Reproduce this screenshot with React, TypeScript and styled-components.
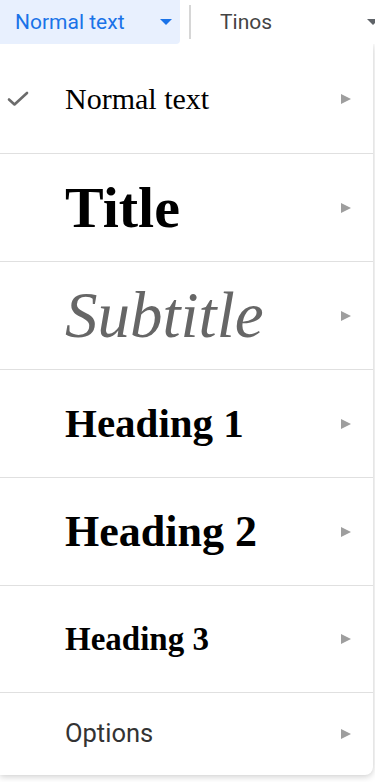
import styled, { createGlobalStyle, css } from 'styled-components';

const GlobalStyle = createGlobalStyle`
  html, body {
    margin: 0;
    padding: 0;
    background: #ffffff;
  }
  body {
    font-family: Roboto, "Liberation Sans", sans-serif;
    width: 375px;
    height: 782px;
    overflow: hidden;
  }
`;

const Toolbar = styled.div`
  display: flex;
  align-items: center;
  height: 44px;
  background: #ffffff;
  position: relative;
  z-index: 1;
`;

const StyleButton = styled.div`
  display: flex;
  align-items: center;
  justify-content: space-between;
  width: 180px;
  height: 44px;
  box-sizing: border-box;
  padding: 0 8px 0 15px;
  background: #e8f0fe;
  border-bottom-right-radius: 4px;
  color: #1a73e8;
  font-size: 21px;
`;

const Divider = styled.div`
  width: 2px;
  height: 34px;
  margin: 0 10px 0 9px;
  background: #d6d6d6;
`;

const FontButton = styled.div`
  flex: 1;
  display: flex;
  align-items: center;
  justify-content: space-between;
  padding-left: 19px;
  color: #444;
  font-size: 21px;
`;

const Caret = styled.span<{ $color: string }>`
  width: 0;
  height: 0;
  border-left: 6px solid transparent;
  border-right: 6px solid transparent;
  border-top: 6px solid ${(p) => p.$color};
`;

const Menu = styled.div`
  background: #ffffff;
  border-radius: 0 0 8px 0;
  box-shadow: 0 2px 6px rgba(0, 0, 0, 0.18), 0 -2px 4px rgba(0, 0, 0, 0.05);
  margin-right: 2px;
`;

const Row = styled.div<{ $height: number; $last?: boolean }>`
  position: relative;
  display: flex;
  align-items: center;
  box-sizing: border-box;
  height: ${(p) => p.$height}px;
  padding: 0 22px 0 65px;
  ${(p) =>
    !p.$last &&
    css`
      border-bottom: 1.5px solid #e0e0e0;
    `}
`;

const Label = styled.span<{
  $size: number;
  $weight?: number;
  $italic?: boolean;
  $color?: string;
  $sans?: boolean;
}>`
  flex: 1;
  font-family: ${(p) =>
    p.$sans ? 'Roboto, "Liberation Sans", sans-serif' : '"Liberation Serif", Tinos, serif'};
  font-size: ${(p) => p.$size}px;
  font-weight: ${(p) => p.$weight ?? 400};
  font-style: ${(p) => (p.$italic ? 'italic' : 'normal')};
  color: ${(p) => p.$color ?? '#000'};
  line-height: 1;
  white-space: nowrap;
`;

const Arrow = styled.span`
  width: 0;
  height: 0;
  border-top: 5px solid transparent;
  border-bottom: 5px solid transparent;
  border-left: 10px solid #9e9e9e;
`;

const Check = styled.svg`
  position: absolute;
  left: 6px;
  top: 50%;
  margin-top: -8px;
`;

type Item = {
  label: string;
  size: number;
  weight?: number;
  italic?: boolean;
  color?: string;
  sans?: boolean;
  height: number;
  checked?: boolean;
};

const items: Item[] = [
  { label: 'Normal text', size: 30, height: 110, checked: true },
  { label: 'Title', size: 58, weight: 700, height: 108 },
  { label: 'Subtitle', size: 65, italic: true, color: '#666', height: 108 },
  { label: 'Heading 1', size: 41, weight: 700, height: 108 },
  { label: 'Heading 2', size: 44, weight: 700, height: 108 },
  { label: 'Heading 3', size: 33, weight: 700, height: 107 },
  { label: 'Options', size: 25.5, color: '#333', sans: true, height: 82 },
];

const App = () => {
  return (
    <>
      <GlobalStyle />
      <Toolbar>
        <StyleButton>
          Normal text
          <Caret $color="#1a73e8" />
        </StyleButton>
        <Divider />
        <FontButton>
          Tinos
          <Caret $color="#5f6368" style={{ marginRight: -4 }} />
        </FontButton>
      </Toolbar>
      <Menu>
        {items.map((it, i) => (
          <Row key={it.label} $height={it.height} $last={i === items.length - 1}>
            {it.checked && (
              <Check width="24" height="16" viewBox="0 0 24 16">
                <path
                  d="M3 8.5 L8.5 13.5 L21 2"
                  fill="none"
                  stroke="#6b6b6b"
                  strokeWidth="2.6"
                  strokeLinecap="round"
                  strokeLinejoin="round"
                />
              </Check>
            )}
            <Label
              $size={it.size}
              $weight={it.weight}
              $italic={it.italic}
              $color={it.color}
              $sans={it.sans}
            >
              {it.label}
            </Label>
            <Arrow />
          </Row>
        ))}
      </Menu>
    </>
  );
};

export default App;
